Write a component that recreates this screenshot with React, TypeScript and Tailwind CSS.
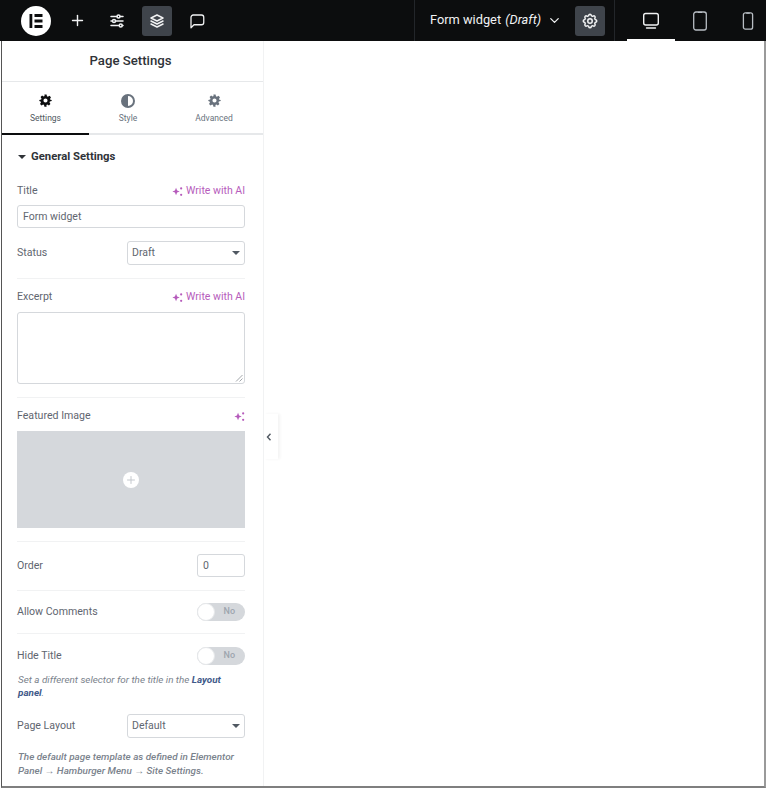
import type { ReactNode } from "react";
import { TbAdjustmentsHorizontal, TbChevronDown, TbPlus, TbSettings, TbStack2 } from "react-icons/tb";

function CogIcon({ className }: { className: string }) {
  return (
    <svg className={className} viewBox="0 0 24 24" fill="currentColor">
      <path
        fillRule="evenodd"
        d="M10 1h4l.7 3.3 1.7.8 2.9-1.8 2.8 2.8-1.8 2.9.8 1.7L23.4 11v2l-3.3.7-.8 1.7 1.8 2.9-2.8 2.8-2.9-1.8-1.7.8L14 23.4h-4l-.7-3.3-1.7-.8-2.9 1.8-2.8-2.8 1.8-2.9-.8-1.7L.6 13v-2l3.3-.7.8-1.7L2.9 5.7l2.8-2.8 2.9 1.8 1.7-.8L10 1Zm2 7.2a3.8 3.8 0 1 0 0 7.6 3.8 3.8 0 0 0 0-7.6Z"
      />
    </svg>
  );
}

function SparkIcon({ className }: { className: string }) {
  return (
    <svg className={className} viewBox="0 0 12 12" fill="currentColor">
      <path d="M4.4 2 5.6 4.8 8.4 6 5.6 7.2 4.4 10 3.2 7.2.4 6l2.8-1.2L4.4 2Z" />
      <circle cx="10" cy="2.6" r="1.2" />
      <circle cx="10" cy="9.6" r="1.2" />
    </svg>
  );
}

function Caret() {
  return <span className="h-0 w-0 border-x-[4px] border-t-[4px] border-x-transparent border-t-[#515962]" />;
}

function WriteWithAi() {
  return (
    <span className="flex items-center gap-[3px] text-[10.5px] text-[#b65cbc]">
      <SparkIcon className="h-[11px] w-[11px]" />
      Write with AI
    </span>
  );
}

function Select({ value }: { value: string }) {
  return (
    <div className="flex h-[24px] w-[118px] items-center justify-between rounded-[3px] border border-[#d5d8dc] pl-[4px] pr-[4px] text-[10.5px] text-[#5f6670]">
      {value}
      <Caret />
    </div>
  );
}

function Toggle() {
  return (
    <div className="flex h-[18px] w-[48px] items-center justify-between rounded-full bg-[#d5d8dc] pr-[10px]">
      <span className="h-[18px] w-[18px] rounded-full border border-[#e6e8ea] bg-white" />
      <span className="text-[9px] font-medium text-[#9da5ae]">No</span>
    </div>
  );
}

function Row({ label, children, className }: { label: string; children: ReactNode; className: string }) {
  return (
    <div className={`flex items-center justify-between ${className}`}>
      <span className="text-[10.6px] text-[#5f6670]">{label}</span>
      {children}
    </div>
  );
}

function Divider({ className }: { className: string }) {
  return <div className={`h-px bg-[#f1f2f3] ${className}`} />;
}

export default function App() {
  return (
    <div className="flex h-[790px] w-[768px] flex-col overflow-hidden bg-white font-['Roboto',sans-serif]">
      <header className="flex h-[41px] w-[766px] shrink-0 items-center overflow-hidden bg-[#0c0d0e] text-[#f1f2f3]">
        <div className="ml-[21px] flex h-[30px] w-[30px] shrink-0 items-center justify-center rounded-full bg-white">
          <svg className="h-[14px] w-[14px]" viewBox="0 0 14 14" fill="#0c0d0e">
            <rect x="0.5" y="0" width="2.8" height="14" />
            <rect x="5.5" y="0" width="8" height="3" />
            <rect x="5.5" y="5.5" width="8" height="3" />
            <rect x="5.5" y="11" width="8" height="3" />
          </svg>
        </div>
        <div className="ml-[11px] flex h-[30px] w-[30px] shrink-0 items-center justify-center">
          <TbPlus size={17} />
        </div>
        <div className="ml-[10px] flex h-[30px] w-[30px] shrink-0 items-center justify-center">
          <TbAdjustmentsHorizontal size={18} />
        </div>
        <div className="ml-[10px] flex h-[30px] w-[30px] shrink-0 items-center justify-center rounded-[3px] bg-[#3f444b]">
          <TbStack2 size={18} />
        </div>
        <div className="ml-[10px] flex h-[30px] w-[30px] shrink-0 items-center justify-center">
          <svg className="h-[18px] w-[18px]" viewBox="0 0 24 24" fill="none" stroke="currentColor" strokeWidth="1.7" strokeLinejoin="round">
            <path d="M7 4h11a3 3 0 0 1 3 3v7a3 3 0 0 1-3 3H8l-4 4V7a3 3 0 0 1 3-3Z" />
          </svg>
        </div>
        <div className="ml-[202px] flex h-full w-[201px] shrink-0 items-center border-x border-[#23262a]">
          <span className="ml-[15px] text-[12.8px] leading-none">
            Form widget <em className="ml-[1px]">(Draft)</em>
          </span>
          <TbChevronDown className="ml-[6px]" size={15} />
          <div className="ml-auto mr-[9px] flex h-[30px] w-[30px] items-center justify-center rounded-[3px] bg-[#3f444b]">
            <TbSettings size={18} />
          </div>
        </div>
        <div className="ml-[12px] flex h-full w-[48px] shrink-0 items-center justify-center border-b-2 border-white pt-[2px]">
          <svg className="h-[20px] w-[20px]" viewBox="0 0 20 20" fill="none" stroke="currentColor" strokeWidth="1.4" strokeLinecap="round">
            <rect x="2.7" y="2.5" width="14.6" height="11.5" rx="2" />
            <path d="M5.5 17h9" />
          </svg>
        </div>
        <div className="ml-[1px] flex h-full w-[48px] shrink-0 items-center justify-center text-[#b8bdc3]">
          <svg className="h-[20px] w-[16px]" viewBox="0 0 16 20" fill="none" stroke="currentColor" strokeWidth="1.3">
            <rect x="1.7" y="1" width="12.6" height="18" rx="2.2" />
            <path d="M6.5 1.4h3" strokeLinecap="round" />
          </svg>
        </div>
        <div className="flex h-full w-[48px] shrink-0 items-center justify-center text-[#b8bdc3]">
          <svg className="h-[18px] w-[12px]" viewBox="0 0 12 18" fill="none" stroke="currentColor" strokeWidth="1.3">
            <rect x="1.4" y="0.8" width="9.2" height="16.4" rx="2" />
            <path d="M4.8 1.2h2.4" strokeLinecap="round" />
          </svg>
        </div>
      </header>

      <div className="ml-px flex h-[747px] w-[765px] shrink-0 border-b-2 border-l border-r-2 border-b-[#7f7f7f] border-l-[#555555] border-r-[#9a9a9a]">
        <aside className="flex h-full w-[262px] shrink-0 flex-col border-r border-[#f1f2f3]">
          <div className="flex h-[41px] shrink-0 items-center justify-center border-b border-[#e6e8ea] pr-[4px] text-[13.2px] font-medium text-[#2f3338]">
            Page Settings
          </div>
          <div className="flex h-[53px] shrink-0 border-b-[2px] border-[#e6e8ea] pt-[12px]">
            <div className="-mb-[2px] flex w-[87px] flex-col items-center border-b-2 border-[#0c0d0e] text-[#0c0d0e]">
              <CogIcon className="h-[13px] w-[13px]" />
              <span className="mt-[5px] text-[8.5px] leading-[12px] text-[#515962]">Settings</span>
            </div>
            <div className="flex w-[78px] flex-col items-center text-[#69727d]">
              <span className="h-[14px] w-[14px] rounded-full border-2 border-[#69727d] bg-[linear-gradient(90deg,#69727d_50%,#ffffff_50%)]" />
              <span className="mt-[4px] text-[8.5px] leading-[12px]">Style</span>
            </div>
            <div className="flex w-[94px] flex-col items-center text-[#69727d]">
              <CogIcon className="h-[13px] w-[13px]" />
              <span className="mt-[5px] text-[8.5px] leading-[12px]">Advanced</span>
            </div>
          </div>

          <div className="flex flex-col px-[15px] pr-[18px]">
            <div className="mt-[14px] flex h-[16px] items-center gap-[5px] text-[11.3px] font-bold text-[#2f3338]">
              <span className="ml-px h-0 w-0 border-x-[4px] border-t-[4px] border-x-transparent border-t-[#2f3338]" />
              General Settings
            </div>
            <div className="mt-[19px] flex h-[14px] items-center justify-between">
              <span className="text-[10.6px] text-[#5f6670]">Title</span>
              <WriteWithAi />
            </div>
            <div className="mt-[7px] flex h-[23px] items-center rounded-[3px] border border-[#d5d8dc] pl-[5px] text-[10.5px] text-[#5f6670]">
              Form widget
            </div>
            <Row label="Status" className="mt-[13px]">
              <Select value="Draft" />
            </Row>
            <Divider className="mt-[13px]" />
            <div className="mt-[11px] flex h-[14px] items-center justify-between">
              <span className="text-[10.6px] text-[#5f6670]">Excerpt</span>
              <WriteWithAi />
            </div>
            <div className="relative mt-[8px] h-[72px] rounded-[3px] border border-[#d5d8dc]">
              <svg className="absolute bottom-px right-px h-[8px] w-[8px]" viewBox="0 0 8 8" stroke="#8a8f95" strokeWidth="0.8">
                <path d="M1 7.5 7.5 1M4.5 7.5l3-3" />
              </svg>
            </div>
            <Divider className="mt-[13px]" />
            <div className="mt-[11px] flex h-[14px] items-center justify-between">
              <span className="text-[10.6px] text-[#5f6670]">Featured Image</span>
              <SparkIcon className="h-[11px] w-[11px] text-[#b65cbc]" />
            </div>
            <div className="mt-[8px] flex h-[97px] items-center justify-center bg-[#d5d8dc]">
              <span className="flex h-[16px] w-[16px] items-center justify-center rounded-full bg-white text-[#c4c8cd]">
                <TbPlus size={12} />
              </span>
            </div>
            <Divider className="mt-[13px]" />
            <Row label="Order" className="mt-[12px]">
              <div className="flex h-[23px] w-[48px] items-center rounded-[3px] border border-[#d5d8dc] pl-[5px] text-[10.5px] text-[#5f6670]">
                0
              </div>
            </Row>
            <Divider className="mt-[13px]" />
            <Row label="Allow Comments" className="mt-[12px]">
              <Toggle />
            </Row>
            <Divider className="mt-[12px]" />
            <Row label="Hide Title" className="mt-[13px]">
              <Toggle />
            </Row>
            <p className="ml-px mt-[8px] text-[9.9px] leading-[13px] text-[#7a828c] italic">
              Set a different selector for the title in the <b className="font-bold text-[#3f5a8a]">Layout</b>{" "}
              <b className="font-bold text-[#3f5a8a]">panel</b>.
            </p>
            <Row label="Page Layout" className="mt-[15px]">
              <Select value="Default" />
            </Row>
            <p className="ml-px mt-[12px] text-[9.9px] leading-[14px] font-medium text-[#7a828c] italic">
              The default page template as defined in Elementor Panel → Hamburger Menu → Site Settings.
            </p>
          </div>
        </aside>
        <div className="relative flex-1">
          <div className="flex h-[45px] w-[14px] translate-y-[373px] items-center justify-start bg-white pl-[2px] text-[#515962] shadow-[2px_0_3px_rgba(0,0,0,0.05)]">
            <svg className="h-[8px] w-[6px]" viewBox="0 0 6 8" fill="none" stroke="currentColor" strokeWidth="1.4">
              <path d="M4.5 0.8 1.5 4l3 3.2" />
            </svg>
          </div>
        </div>
      </div>
    </div>
  );
}
